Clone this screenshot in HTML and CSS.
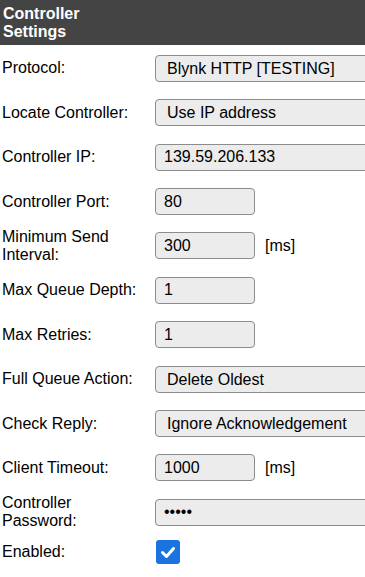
FILE: index.html
```html
<!DOCTYPE html>
<html lang="en">
<head>
    <meta charset="UTF-8">
    <meta name="viewport" content="width=device-width, initial-scale=1.0">
    <title>Controller Settings</title>
    <link rel="stylesheet" href="styles.css">
</head>
<body>
    <div class="header">
        <div class="header-title">Controller Settings</div>
    </div>

    <div class="form">
        <div class="row">
            <label class="label">Protocol:</label>
            <div class="field"><select class="select"><option>Blynk HTTP [TESTING]</option></select></div>
        </div>
        <div class="row">
            <label class="label">Locate Controller:</label>
            <div class="field"><select class="select"><option>Use IP address</option></select></div>
        </div>
        <div class="row">
            <label class="label">Controller IP:</label>
            <div class="field"><input class="input wide" type="text" value="139.59.206.133"></div>
        </div>
        <div class="row">
            <label class="label">Controller Port:</label>
            <div class="field"><input class="input" type="text" value="80"></div>
        </div>
        <div class="row">
            <label class="label">Minimum Send Interval:</label>
            <div class="field"><input class="input" type="text" value="300"><span class="unit">[ms]</span></div>
        </div>
        <div class="row">
            <label class="label">Max Queue Depth:</label>
            <div class="field"><input class="input" type="text" value="1"></div>
        </div>
        <div class="row">
            <label class="label">Max Retries:</label>
            <div class="field"><input class="input" type="text" value="1"></div>
        </div>
        <div class="row">
            <label class="label">Full Queue Action:</label>
            <div class="field"><select class="select"><option>Delete Oldest</option></select></div>
        </div>
        <div class="row">
            <label class="label">Check Reply:</label>
            <div class="field"><select class="select"><option>Ignore Acknowledgement</option></select></div>
        </div>
        <div class="row">
            <label class="label">Client Timeout:</label>
            <div class="field"><input class="input" type="text" value="1000"><span class="unit">[ms]</span></div>
        </div>
        <div class="row">
            <label class="label">Controller Password:</label>
            <div class="field"><input class="input wide" type="password" value="xxxxx"></div>
        </div>
        <div class="row short">
            <label class="label">Enabled:</label>
            <div class="field">
                <span class="checkbox">
                    <svg width="24" height="24" viewBox="0 0 24 24"><path d="M6.5 12.5 L10.5 16.5 L17.5 8.5" fill="none" stroke="#fff" stroke-width="3" stroke-linecap="round" stroke-linejoin="round"/></svg>
                </span>
            </div>
        </div>
    </div>
</body>
</html>
```

FILE: styles.css
```css
html, body {
    overflow: hidden;
}

body {
    margin: 0;
    padding: 0;
    background: #fff;
    color: #000;
    font-family: "Liberation Sans", Arial, sans-serif;
    font-size: 16px;
}

.header {
    background: #444;
    color: #fff;
    padding: 4.6px 3px;
}

.header-title {
    width: 130px;
    font-weight: bold;
}

.form {
    margin-top: 1px;
    width: 430px;
}

.row {
    display: grid;
    grid-template-columns: 155px 1fr;
    align-items: center;
    height: 44.4px;
}

.row.short {
    height: 36px;
}

.label {
    padding-left: 2px;
    padding-right: 8px;
}

.field {
    display: flex;
    align-items: center;
}

.input,
.select {
    box-sizing: border-box;
    height: 27px;
    margin: 0;
    border: 1px solid #8c8c8c;
    border-radius: 4px;
    background: #ececec;
    color: #000;
    font-family: "Liberation Sans", Arial, sans-serif;
    font-size: 16px;
    outline: none;
}

.input {
    width: 100px;
    padding: 0 8px;
}

.input.wide {
    width: 260px;
}

.select {
    width: 260px;
    padding: 0 11px;
    -webkit-appearance: none;
    appearance: none;
}

.unit {
    margin-left: 10px;
}

.checkbox {
    display: block;
    width: 24px;
    height: 24px;
    margin-left: 1px;
    border-radius: 3px;
    background: #1b73e2;
}

.checkbox svg {
    display: block;
}
```
